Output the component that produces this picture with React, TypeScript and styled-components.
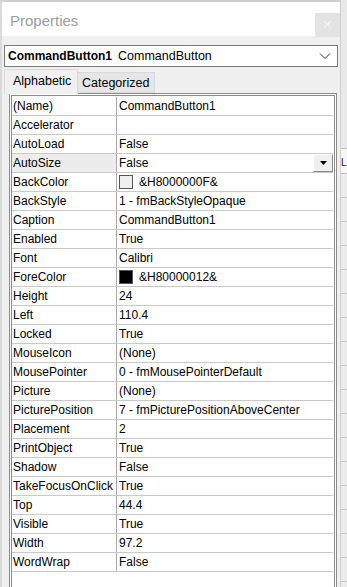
import React from 'react';
import styled, { createGlobalStyle } from 'styled-components';

type Prop = {
  name: string;
  value: string;
  swatch?: string;
  selected?: boolean;
};

const props: Prop[] = [
  { name: '(Name)', value: 'CommandButton1' },
  { name: 'Accelerator', value: '' },
  { name: 'AutoLoad', value: 'False' },
  { name: 'AutoSize', value: 'False', selected: true },
  { name: 'BackColor', value: '&H8000000F&', swatch: '#f0f0f0' },
  { name: 'BackStyle', value: '1 - fmBackStyleOpaque' },
  { name: 'Caption', value: 'CommandButton1' },
  { name: 'Enabled', value: 'True' },
  { name: 'Font', value: 'Calibri' },
  { name: 'ForeColor', value: '&H80000012&', swatch: '#000000' },
  { name: 'Height', value: '24' },
  { name: 'Left', value: '110.4' },
  { name: 'Locked', value: 'True' },
  { name: 'MouseIcon', value: '(None)' },
  { name: 'MousePointer', value: '0 - fmMousePointerDefault' },
  { name: 'Picture', value: '(None)' },
  { name: 'PicturePosition', value: '7 - fmPicturePositionAboveCenter' },
  { name: 'Placement', value: '2' },
  { name: 'PrintObject', value: 'True' },
  { name: 'Shadow', value: 'False' },
  { name: 'TakeFocusOnClick', value: 'True' },
  { name: 'Top', value: '44.4' },
  { name: 'Visible', value: 'True' },
  { name: 'Width', value: '97.2' },
  { name: 'WordWrap', value: 'False' },
];

const App = () => {
  return (
    <>
      <GlobalStyle />
      <Screen>
        <Panel>
          <TitleBar>
            <Title>Properties</Title>
            <CloseButton>×</CloseButton>
          </TitleBar>
          <Body>
            <ObjectCombo>
              <ObjectName>CommandButton1</ObjectName>
              <ObjectType>CommandButton</ObjectType>
              <Chevron width="12" height="8" viewBox="0 0 12 8">
                <path d="M1 1.5 L6 6.5 L11 1.5" fill="none" stroke="#333" strokeWidth="1" />
              </Chevron>
            </ObjectCombo>
            <Tabs>
              <Tab $active>Alphabetic</Tab>
              <Tab>Categorized</Tab>
            </Tabs>
            <Grid>
              {props.map((p) => (
                <Row key={p.name}>
                  <NameCell $selected={p.selected}>{p.name}</NameCell>
                  <ValueCell>
                    {p.swatch && <Swatch $color={p.swatch} />}
                    <span>{p.value}</span>
                    {p.selected && (
                      <DropButton>
                        <svg width="7" height="4" viewBox="0 0 7 4">
                          <path d="M0 0 L7 0 L3.5 4 Z" fill="#000" />
                        </svg>
                      </DropButton>
                    )}
                  </ValueCell>
                </Row>
              ))}
            </Grid>
          </Body>
        </Panel>
        <SideStrip>
          <SideCell>L</SideCell>
          <SideLines />
        </SideStrip>
      </Screen>
    </>
  );
};

const GlobalStyle = createGlobalStyle`
  html, body {
    margin: 0;
    padding: 0;
    background: #f0f0f0;
    font-family: "Liberation Sans", Arial, sans-serif;
  }
  * { box-sizing: border-box; }
`;

const Screen = styled.div`
  width: 347px;
  height: 587px;
  display: flex;
  overflow: hidden;
`;

const Panel = styled.div`
  width: 340px;
  height: 587px;
  display: flex;
  flex-direction: column;
  background: #f0f0f0;
  border-left: 2px solid #dadada;
  border-top: 2px solid #cfcfcf;
`;

const TitleBar = styled.div`
  height: 34px;
  background: #ffffff;
  display: flex;
  align-items: center;
  justify-content: space-between;
  padding-left: 8px;
`;

const Title = styled.div`
  font-size: 15px;
  color: #9c9c9c;
  margin-top: 2px;
`;

const CloseButton = styled.div`
  width: 25px;
  height: 24px;
  margin-top: 12px;
  background: #e3e3e3;
  color: #f4f4f4;
  font-size: 16px;
  display: flex;
  align-items: center;
  justify-content: center;
`;

const Body = styled.div`
  display: flex;
  flex-direction: column;
  padding: 0 0 0 2px;
  flex: 1;
`;

const ObjectCombo = styled.div`
  margin-top: 9px;
  width: 334px;
  height: 22px;
  background: #ffffff;
  border: 1px solid #7a7a7a;
  display: flex;
  align-items: center;
  padding-left: 3px;
  font-size: 12.5px;
  color: #000;
`;

const ObjectName = styled.span`
  font-weight: bold;
  font-size: 12px;
  margin-right: 6px;
`;

const ObjectType = styled.span`
  flex: 1;
`;

const Chevron = styled.svg`
  margin-right: 6px;
`;

const Tabs = styled.div`
  display: flex;
  align-items: flex-end;
  height: 25px;
  margin-top: 1px;
  position: relative;
  z-index: 1;
`;

const Tab = styled.div<{ $active?: boolean }>`
  height: ${(p) => (p.$active ? '25px' : '21px')};
  padding: 0 ${(p) => (p.$active ? '8px' : '4px')};
  width: ${(p) => (p.$active ? '74px' : '77px')};
  font-size: 12.5px;
  color: #000;
  display: flex;
  align-items: center;
  background: ${(p) => (p.$active ? '#f0f0f0' : '#e6e6e6')};
  border: 1px solid #d9d9d9;
  border-bottom: ${(p) => (p.$active ? 'none' : '1px solid #d9d9d9')};
  border-left: ${(p) => (p.$active ? '1px solid #d9d9d9' : 'none')};
  margin-bottom: ${(p) => (p.$active ? '-1px' : '0')};
  padding-bottom: ${(p) => (p.$active ? '3px' : '0')};
`;

const Grid = styled.div`
  margin-left: 5px;
  width: 328px;
  flex: 1;
  background: #ffffff;
  border: 3px double #8c8c8c;
  border-bottom: none;
  padding-top: 1px;
  padding-right: 1px;
`;

const Row = styled.div`
  display: grid;
  grid-template-columns: 105px 1fr;
  height: 19px;
  border-bottom: 1px solid #c9c9c9;
  font-size: 12px;
  color: #000;
`;

const NameCell = styled.div<{ $selected?: boolean }>`
  border-right: 1px solid #a8a8a8;
  padding-left: 1px;
  line-height: 18px;
  white-space: nowrap;
  overflow: hidden;
  background: ${(p) => (p.$selected ? '#ececec' : '#ffffff')};
`;

const ValueCell = styled.div`
  display: flex;
  align-items: center;
  padding-left: 2px;
  white-space: nowrap;
  overflow: hidden;
  line-height: 18px;
  position: relative;
`;

const Swatch = styled.div<{ $color: string }>`
  width: 14px;
  height: 14px;
  border: 1px solid #555;
  background: ${(p) => p.$color};
  margin-right: 6px;
`;

const DropButton = styled.div`
  position: absolute;
  right: 0;
  top: 0;
  width: 20px;
  height: 18px;
  background: #f0f0f0;
  border-top: 1px solid #fff;
  border-left: 1px solid #fff;
  border-right: 1px solid #8a8a8a;
  border-bottom: 1px solid #8a8a8a;
  display: flex;
  align-items: center;
  justify-content: center;
`;

const SideStrip = styled.div`
  width: 7px;
  height: 587px;
  background: #e9e9e9;
  border-left: 1px solid #cfcfcf;
  display: flex;
  flex-direction: column;
  padding-top: 148px;
  overflow: hidden;
`;

const SideCell = styled.div`
  height: 26px;
  background: #f7f7f7;
  border-top: 1px solid #c0c0c0;
  border-bottom: 1px solid #c0c0c0;
  font-size: 10px;
  padding-left: 0;
  padding-top: 8px;
  line-height: 12px;
  color: #222;
`;

const SideLines = styled.div`
  flex: 1;
  background: repeating-linear-gradient(
    to bottom,
    #ececec 0,
    #ececec 23px,
    #c8c8c8 23px,
    #c8c8c8 24px
  );
`;

export default App;
